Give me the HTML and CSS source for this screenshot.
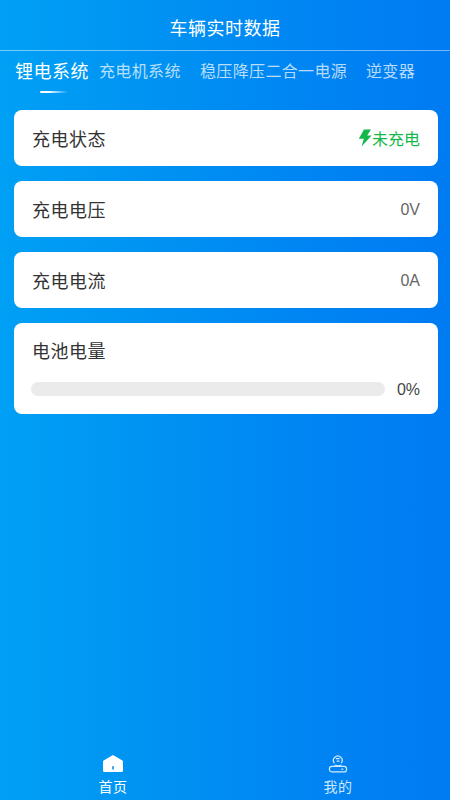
FILE: index.html
```html
<!DOCTYPE html>
<html lang="zh">
<head>
<meta charset="utf-8">
<title>车辆实时数据</title>
<link rel="stylesheet" href="styles.css">
</head>
<body>
<div class="app">
  <header class="title">车辆实时数据</header>
  <nav class="tabs">
    <div class="tab tab-active">锂电系统<span class="indicator"></span></div>
    <div class="tab tab-2">充电机系统</div>
    <div class="tab tab-3">稳压降压二合一电源</div>
    <div class="tab tab-4">逆变器</div>
  </nav>
  <main class="cards">
    <section class="card row">
      <span class="label">充电状态</span>
      <span class="status">
        <svg class="bolt" viewBox="0 0 14 18" width="14" height="18"><path d="M6 0.5 L13 0.5 L9.2 6.6 L13.6 6.6 L3.6 17.6 L5.8 9.8 L0.8 9.8 Z" fill="#14b84a"/></svg>未充电
      </span>
    </section>
    <section class="card row">
      <span class="label">充电电压</span>
      <span class="value">0V</span>
    </section>
    <section class="card row">
      <span class="label">充电电流</span>
      <span class="value">0A</span>
    </section>
    <section class="card battery">
      <div class="label">电池电量</div>
      <div class="progress-row">
        <div class="track"></div>
        <span class="percent">0%</span>
      </div>
    </section>
  </main>
  <footer class="tabbar">
    <div class="nav-item nav-active">
      <svg viewBox="0 0 20 18" width="20" height="18"><path d="M10 0.4 L19.4 6 Q20 6.4 20 7.2 L20 16 Q20 17.6 18.4 17.6 L1.6 17.6 Q0 17.6 0 16 L0 7.2 Q0 6.4 0.6 6 Z" fill="#fff"/><rect x="9.2" y="11.6" width="1.6" height="3.4" rx="0.6" fill="#0a8fef"/></svg>
      <span>首页</span>
    </div>
    <div class="nav-item">
      <svg viewBox="0 0 20 20" width="20" height="20" fill="none" stroke="#d4ebff" stroke-width="1.3"><path d="M6.2 9.6 A4.6 4.6 0 1 1 13.4 9.6"/><path d="M7.8 4.8 L11.6 4.8 M8.6 7.6 L11.6 7.6"/><path d="M6.4 11.6 Q10 13.2 13.6 11.6"/><rect x="1" y="13" width="18" height="5.8" rx="2.6"/><path d="M13.4 16 L15.6 16"/></svg>
      <span>我的</span>
    </div>
  </footer>
</div>
</body>
</html>
```
FILE: styles.css
```css
* { box-sizing: border-box; }
html, body { margin: 0; padding: 0; }
body {
  width: 450px;
  height: 800px;
  overflow: hidden;
  font-family: "Noto Sans CJK SC", "Liberation Sans", sans-serif;
}
.app {
  width: 450px;
  height: 800px;
  display: flex;
  flex-direction: column;
  background: linear-gradient(90deg, #00a0f5 0%, #0092f2 35%, #0084f3 70%, #007bf2 100%);
}
.title {
  height: 51px;
  padding-top: 3px;
  display: flex;
  align-items: center;
  justify-content: center;
  color: #fff;
  font-size: 18px;
  letter-spacing: 0.5px;
  border-bottom: 1px solid rgba(255, 255, 255, 0.45);
}
.tabs {
  height: 59px;
  display: flex;
  padding: 7px 0 0 15px;
  align-items: flex-start;
  color: rgba(255, 255, 255, 0.72);
  font-size: 16px;
  letter-spacing: 0.35px;
  line-height: 24px;
  white-space: nowrap;
}
.tab { flex: none; }
.tab-active {
  position: relative;
  width: 84px;
  color: #fff;
  font-size: 18px;
  letter-spacing: 0.5px;
  line-height: 24px;
}
.indicator {
  position: absolute;
  left: 25px;
  top: 33px;
  width: 28px;
  height: 2px;
  border-radius: 1px;
  background: linear-gradient(90deg, #fff 30%, rgba(255, 255, 255, 0));
}
.tab-2 { width: 101px; }
.tab-3 { width: 166px; }
.cards {
  flex: 1;
  display: flex;
  flex-direction: column;
  gap: 15px;
  padding: 0 12px 0 14px;
}
.card {
  background: #fff;
  border-radius: 8px;
  color: #333;
}
.row {
  height: 56px;
  padding: 0 18px;
  display: flex;
  align-items: center;
  justify-content: space-between;
}
.label {
  font-size: 18px;
  letter-spacing: 0.5px;
  line-height: 24px;
  color: #333;
}
.row .label { margin-bottom: 1px; }
.value {
  font-size: 16px;
  padding-top: 2px;
  color: #666;
  font-family: "Liberation Sans", sans-serif;
}
.status {
  display: flex;
  align-items: center;
  font-size: 16px;
  color: #14b84a;
}
.battery {
  height: 91px;
  padding: 15px 18px 0 18px;
}
.progress-row {
  display: flex;
  align-items: flex-start;
  margin-top: 20px;
}
.track {
  width: 354px;
  height: 14px;
  margin-left: -1px;
  border-radius: 7px;
  background: #ebebeb;
}
.percent {
  margin-left: auto;
  font-size: 16px;
  line-height: 16px;
  color: #444;
  font-family: "Liberation Sans", sans-serif;
}
.tabbar {
  height: 50px;
  display: flex;
  flex: none;
}
.nav-item {
  flex: 1;
  height: 50px;
  display: flex;
  flex-direction: column;
  align-items: center;
  color: #cfe8ff;
  font-size: 14px;
  letter-spacing: 0.5px;
  line-height: 18px;
  padding-top: 4px;
  padding-left: 1px;
  gap: 4px;
}
.nav-item svg { height: 19px; }
.nav-active { color: #fff; }
```
